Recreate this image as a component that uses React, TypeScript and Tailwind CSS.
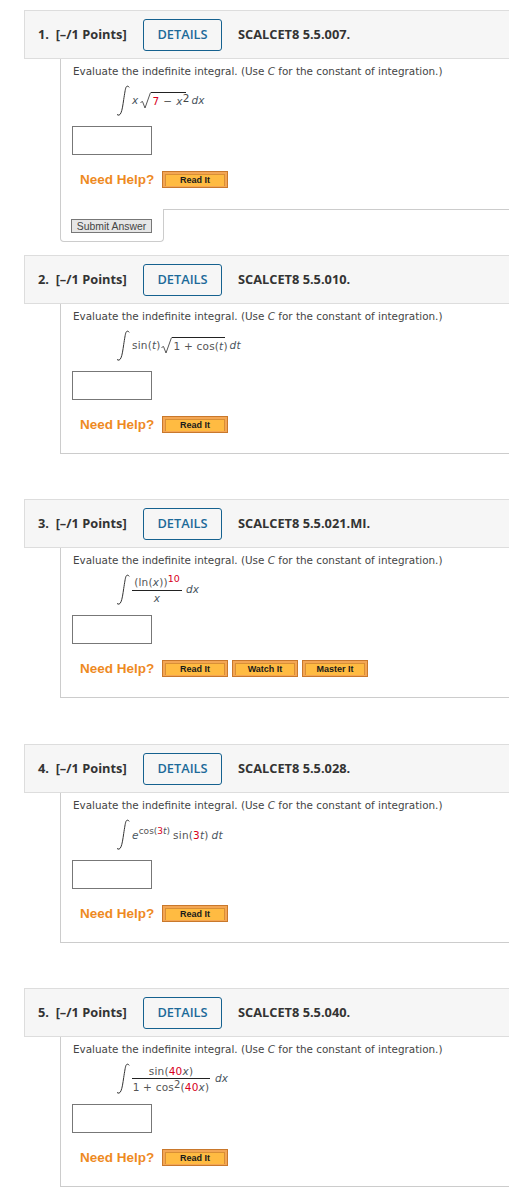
const dejavu = "font-['DejaVu_Sans',sans-serif]";

function Integral() {
  return (
    <svg width="15" height="31" viewBox="0 0 15 31" className="shrink-0" fill="none">
      <path
        d="M14.2 2.4 C13.4 0.9 11.8 0.6 11 2.4 C10.2 4.2 9.6 9 8.7 14.5 C7.9 20 7.2 25 6 27.8 C5 30.3 3.2 30.8 2 29.4"
        stroke="#333"
        strokeWidth="1"
      />
    </svg>
  );
}

function Root({ children, w, className }: { children: React.ReactNode; w: number; className?: string }) {
  return (
    <div className={`flex items-start h-[17px] shrink-0 ${className ?? ""}`}>
      <svg width="11" height="17" viewBox="0 0 11 17" fill="none" className="shrink-0">
        <path d="M0.5 10.5 L2.5 9.5 L5 16 L10.5 0.5" stroke="#444" strokeWidth="0.9" />
      </svg>
      <span className="border-t border-[#222] leading-[16px] block whitespace-nowrap" style={{ width: w }}>
        {children}
      </span>
    </div>
  );
}

const V = ({ children }: { children: React.ReactNode }) => <i className="text-[#4a5560]">{children}</i>;
const R = ({ children }: { children: React.ReactNode }) => <span className="text-[#d8001c]">{children}</span>;

const exprBase = `flex items-center h-[31px] ml-[54px] text-[10.5px] tracking-[0.2px] text-[#555] ${dejavu}`;

function Expr1() {
  return (
    <div className={exprBase}>
      <Integral />
      <span className="ml-[2px]"><V>x</V></span>
      <Root w={35} className="ml-[2px]">
        <span className="ml-[1px]">
          <R>7</R>
          <span className="mx-[4px]">−</span>
          <V>x</V>
          <span className="text-[10.5px] text-[#444] relative -top-[3px]">2</span>
        </span>
      </Root>
      <span className="ml-[5px]"><V>dx</V></span>
    </div>
  );
}

function Expr2() {
  return (
    <div className={exprBase}>
      <Integral />
      <span className="ml-[2px]">sin(<V>t</V>)</span>
      <Root w={53}>
        <span className="ml-[2px]">1 + cos(<V>t</V>)</span>
      </Root>
      <span className="ml-[5px]"><V>dt</V></span>
    </div>
  );
}

function Expr3() {
  return (
    <div className={exprBase}>
      <Integral />
      <span className="ml-[2px] inline-flex flex-col items-center w-[50px]">
        <span className="leading-[15px] border-b border-[#222] w-full text-center whitespace-nowrap">
          (ln(<V>x</V>))<span className="text-[9.5px] tracking-normal text-[#d8001c] relative -top-[4px]">10</span>
        </span>
        <span className="leading-[14px]"><V>x</V></span>
      </span>
      <span className="ml-[4px]"><V>dx</V></span>
    </div>
  );
}

function Expr4() {
  return (
    <div className={exprBase}>
      <Integral />
      <span className="ml-[2px] relative top-[1px]"><V>e</V></span>
      <span className="relative -top-[3px] text-[9px] tracking-normal">cos(<R>3</R><V>t</V>)</span>
      <span className="ml-[3px] relative top-[1px]">sin(<R>3</R><V>t</V>)</span>
      <span className="ml-[3px] relative top-[1px]"><V>dt</V></span>
    </div>
  );
}

function Expr5() {
  return (
    <div className={exprBase}>
      <Integral />
      <span className="ml-[2px] inline-flex flex-col items-center w-[78px]">
        <span className="leading-[14px] border-b border-[#222] w-full text-center whitespace-nowrap">sin(<R>40</R><V>x</V>)</span>
        <span className="leading-[15px] whitespace-nowrap relative top-[1px]">
          1 + cos<span className="text-[10px] relative -top-[3px]">2</span>(<R>40</R><V>x</V>)
        </span>
      </span>
      <span className="ml-[5px]"><V>dx</V></span>
    </div>
  );
}

function HelpButton({ label }: { label: string }) {
  return (
    <button className="block w-[66px] h-[17px] bg-[#f3a654] border border-[#c9782b] px-[2px] pt-[2px] pb-px">
      <span className="flex items-center justify-center h-full bg-[#ffbb42] border-l border-t border-r border-[#d98f35] text-[9px] font-bold text-[#1a1a1a] font-['Liberation_Sans',sans-serif]">
        {label}
      </span>
    </button>
  );
}

type Question = {
  num: number;
  code: string;
  expr: React.ReactNode;
  helps: string[];
  submit?: boolean;
  gap: string;
};

const questions: Question[] = [
  { num: 1, code: "SCALCET8 5.5.007.", expr: <Expr1 />, helps: ["Read It"], submit: true, gap: "mb-[13px]" },
  { num: 2, code: "SCALCET8 5.5.010.", expr: <Expr2 />, helps: ["Read It"], gap: "mb-[45px]" },
  { num: 3, code: "SCALCET8 5.5.021.MI.", expr: <Expr3 />, helps: ["Read It", "Watch It", "Master It"], gap: "mb-[46px]" },
  { num: 4, code: "SCALCET8 5.5.028.", expr: <Expr4 />, helps: ["Read It"], gap: "mb-[45px]" },
  { num: 5, code: "SCALCET8 5.5.040.", expr: <Expr5 />, helps: ["Read It"], gap: "" },
];

function QuestionBlock({ q }: { q: Question }) {
  return (
    <div className={q.gap}>
      <div className="ml-6 w-[500px] h-[49px] flex items-center bg-[#f6f6f6] border border-[#ddd] border-r-0 font-['Open_Sans',sans-serif] text-[#333]">
        <span className="ml-[13px] w-[105px] text-[12.8px] font-bold whitespace-nowrap">
          {q.num}. &nbsp;[–/1 Points]
        </span>
        <span className="w-[79px] h-[32px] flex items-center justify-center border border-[#15618f] rounded-[3px] text-[12.8px] font-semibold text-[#1c6a99]">
          DETAILS
        </span>
        <span className="ml-4 text-[12.8px] font-bold whitespace-nowrap">{q.code}</span>
      </div>
      <div className={`ml-[60px] border-l border-[#ccc] ${q.submit ? "pb-[21px]" : "border-b pb-[20px]"}`}>
        <p className={`${dejavu} pl-[12px] pt-[5px] text-[10.4px] leading-[14px] text-[#444] whitespace-nowrap`}>
          Evaluate the indefinite integral. (Use <i>C</i> for the constant of integration.)
        </p>
        <div className="mt-[7px]">{q.expr}</div>
        <div className="ml-[11px] mt-[10px] w-[80px] h-[29px] border border-[#777] bg-white" />
        <div className="flex items-center mt-[16px] ml-[19px] h-[17px]">
          <span className="w-[82px] pt-px text-[13.5px] font-bold text-[#ee8a1f] font-['Liberation_Sans',sans-serif] whitespace-nowrap">Need Help?</span>
          <div className="flex gap-[4px]">
            {q.helps.map((h) => (
              <HelpButton key={h} label={h} />
            ))}
          </div>
        </div>
      </div>
      {q.submit && (
        <div className="ml-[60px] flex h-[33px]">
          <div className="w-[104px] border border-t-0 border-[#ccc] rounded-b-[4px] pl-[10px] pt-[10px]">
            <button className="block w-[81px] h-[14px] bg-[#e6e6e6] border border-[#777] text-[10.4px] leading-[11px] text-[#444] font-['Liberation_Sans',sans-serif]">
              Submit Answer
            </button>
          </div>
          <div className="flex-1 border-t border-[#ccc]" />
        </div>
      )}
    </div>
  );
}

export default function App() {
  return (
    <div className="w-[509px] h-[1194px] bg-white overflow-hidden pt-[10px]">
      {questions.map((q) => (
        <QuestionBlock key={q.num} q={q} />
      ))}
    </div>
  );
}
